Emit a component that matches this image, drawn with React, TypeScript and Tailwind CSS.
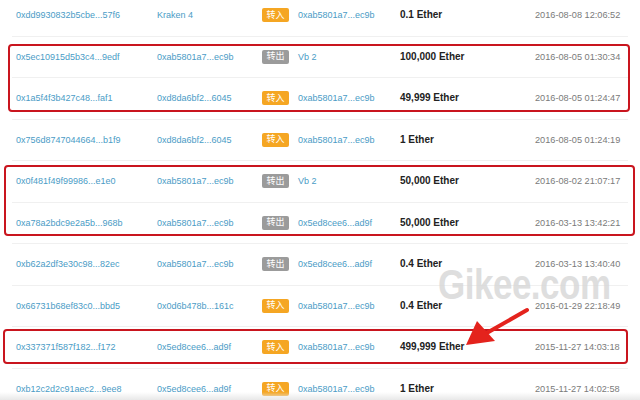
import React from "react";

type Row = { h: string; from: string; dir: "in" | "out"; to: string; amt: string; date: string };

const rows: Row[] = [
  { h: "0xdd9930832b5cbe...57f6", from: "Kraken 4", dir: "in", to: "0xab5801a7...ec9b", amt: "0.1 Ether", date: "2016-08-08 12:06:52" },
  { h: "0x5ec10915d5b3c4...9edf", from: "0xab5801a7...ec9b", dir: "out", to: "Vb 2", amt: "100,000 Ether", date: "2016-08-05 01:30:34" },
  { h: "0x1a5f4f3b427c48...faf1", from: "0xd8da6bf2...6045", dir: "in", to: "0xab5801a7...ec9b", amt: "49,999 Ether", date: "2016-08-05 01:24:47" },
  { h: "0x756d8747044664...b1f9", from: "0xd8da6bf2...6045", dir: "in", to: "0xab5801a7...ec9b", amt: "1 Ether", date: "2016-08-05 01:24:19" },
  { h: "0x0f481f49f99986...e1e0", from: "0xab5801a7...ec9b", dir: "out", to: "Vb 2", amt: "50,000 Ether", date: "2016-08-02 21:07:17" },
  { h: "0xa78a2bdc9e2a5b...968b", from: "0xab5801a7...ec9b", dir: "out", to: "0x5ed8cee6...ad9f", amt: "50,000 Ether", date: "2016-03-13 13:42:21" },
  { h: "0xb62a2df3e30c98...82ec", from: "0xab5801a7...ec9b", dir: "out", to: "0x5ed8cee6...ad9f", amt: "0.4 Ether", date: "2016-03-13 13:40:40" },
  { h: "0x66731b68ef83c0...bbd5", from: "0x0d6b478b...161c", dir: "in", to: "0xab5801a7...ec9b", amt: "0.4 Ether", date: "2016-01-29 22:18:49" },
  { h: "0x337371f587f182...f172", from: "0x5ed8cee6...ad9f", dir: "in", to: "0xab5801a7...ec9b", amt: "499,999 Ether", date: "2015-11-27 14:03:18" },
  { h: "0xb12c2d2c91aec2...9ee8", from: "0x5ed8cee6...ad9f", dir: "in", to: "0xab5801a7...ec9b", amt: "1 Ether", date: "2015-11-27 14:02:58" },
];

export default function App() {
  return (
    <div
      className="relative w-[640px] h-[400px] overflow-hidden bg-white"
      style={{ fontFamily: '"Liberation Sans", Arial, "Noto Sans CJK SC", sans-serif' }}
    >
      <div className="mt-[-5px] flex flex-col">
        {rows.map((r, i) => (
          <div key={i} className="mx-[12px] h-[41.5px] flex items-center border-b border-[#f0f0f0] shrink-0">
            <div className="w-[145px] pl-[4px] text-[9px] leading-[12px] text-[#4a9cc6] whitespace-nowrap">{r.h}</div>
            <div className="w-[105px] text-[9px] leading-[12px] text-[#4a9cc6] whitespace-nowrap">{r.from}</div>
            <div className="w-[36px] flex items-center">
              <div
                className={
                  "flex items-center justify-center w-[27px] h-[14px] rounded-[2px] text-[9px] leading-none text-white " +
                  (r.dir === "in" ? "bg-[#f5a623]" : "bg-[#9b9b9b]")
                }
              >
                {r.dir === "in" ? "转入" : "转出"}
              </div>
            </div>
            <div className="w-[102px] text-[9px] leading-[12px] text-[#4a9cc6] whitespace-nowrap">{r.to}</div>
            <div className="w-[135px] text-[10px] leading-[12px] font-bold text-[#222] whitespace-nowrap">{r.amt}</div>
            <div className="text-[9.2px] leading-[12px] text-[#7a7a7a] whitespace-nowrap">{r.date}</div>
          </div>
        ))}
      </div>

      {/* highlight boxes */}
      <div className="absolute left-[8px] top-[44px] w-[622px] h-[68px] border-2 border-[#c9151e] rounded-[4px]" />
      <div className="absolute left-[4px] top-[165px] w-[631px] h-[71px] border-2 border-[#c9151e] rounded-[4px]" />
      <div className="absolute left-[3px] top-[329px] w-[625px] h-[35px] border-2 border-[#c9151e] rounded-[4px]" />

      {/* watermark */}
      <div
        className="absolute left-[438px] top-[266px] text-[35px] leading-none font-bold tracking-[-0.5px] text-[#d6d6d6] opacity-80 scale-y-[1.2]"
        style={{ fontFamily: '"Liberation Sans", Arial, sans-serif' }}
      >
        Gikee.com
      </div>

      {/* arrow */}
      <svg className="absolute left-0 top-0" width="640" height="400" viewBox="0 0 640 400">
        <line x1="527" y1="310" x2="485" y2="334" stroke="#e4231d" strokeWidth="4" strokeLinecap="round" />
        <polygon points="466,345 477,321 495,341" fill="#e4231d" />
      </svg>

      <div className="absolute left-0 bottom-0 w-full h-[8px] bg-gradient-to-b from-transparent to-[#e8e8e8]" />
    </div>
  );
}
